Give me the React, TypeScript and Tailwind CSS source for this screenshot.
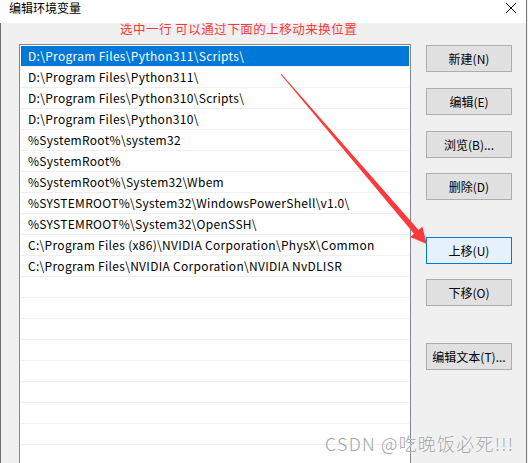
import type { ReactNode } from 'react';

const PATHS = [
  'D:\\Program Files\\Python311\\Scripts\\',
  'D:\\Program Files\\Python311\\',
  'D:\\Program Files\\Python310\\Scripts\\',
  'D:\\Program Files\\Python310\\',
  '%SystemRoot%\\system32',
  '%SystemRoot%',
  '%SystemRoot%\\System32\\Wbem',
  '%SYSTEMROOT%\\System32\\WindowsPowerShell\\v1.0\\',
  '%SYSTEMROOT%\\System32\\OpenSSH\\',
  'C:\\Program Files (x86)\\NVIDIA Corporation\\PhysX\\Common',
  'C:\\Program Files\\NVIDIA Corporation\\NVIDIA NvDLISR',
];

const ROWS = [...PATHS, ...Array.from({ length: 10 }, () => '')];

function WinButton({ children, active, className }: { children: ReactNode; active?: boolean; className?: string }) {
  return (
    <button
      className={
        'w-[86px] h-[27px] flex items-center justify-center text-[12px] leading-[14px] text-black border ' +
        (active ? 'bg-[#e5f1fb] border-[#0078d7] ' : 'bg-[#e1e1e1] border-[#adadad] ') +
        (className ?? '')
      }
    >
      {children}
    </button>
  );
}

export default function App() {
  return (
    <div className="relative w-[528px] h-[463px] overflow-hidden bg-[#f0f0f0] font-['Noto_Sans_CJK_SC',sans-serif] text-black">
      <div className="w-[527px] h-full flex flex-col border-r border-[#7a7a7a]">
        {/* title bar */}
        <div className="h-[23px] shrink-0 bg-white flex items-start justify-between">
          <span className="pl-[9px] pt-px text-[12px] leading-[14px]">编辑环境变量</span>
          <svg width="12" height="12" viewBox="0 0 12 12" className="mt-[2px] mr-[9px]">
            <path d="M1 1 L11 11 M11 1 L1 11" stroke="#000" strokeWidth="1" />
          </svg>
        </div>

        {/* body */}
        <div className="flex-1 flex flex-col border-l border-[#6e6e6e] pl-[18px] pt-[21px] overflow-hidden">
          <div className="flex items-start gap-[15px]">
            <div className="w-[392px] h-[440px] border border-[#828790] bg-white p-px flex flex-col">
              {ROWS.map((p, i) => (
                <div
                  key={i}
                  className={
                    'h-[21px] shrink-0 border-b border-[#efefef] pl-[7px] text-[12px] leading-[20px] tracking-[0.3px] whitespace-nowrap ' +
                    (i === 0 ? 'bg-[#0078d7] text-white' : 'text-black')
                  }
                >
                  {p}
                </div>
              ))}
            </div>

            <div className="flex flex-col">
              <WinButton className="mt-px">新建(N)</WinButton>
              <WinButton className="mt-[16px]">编辑(E)</WinButton>
              <WinButton className="mt-[16px]">浏览(B)...</WinButton>
              <WinButton className="mt-[15px]">删除(D)</WinButton>
              <WinButton className="mt-[37px]" active>上移(U)</WinButton>
              <WinButton className="mt-[15px]">下移(O)</WinButton>
              <WinButton className="mt-[37px]">编辑文本(T)...</WinButton>
            </div>
          </div>
        </div>
      </div>

      {/* red annotation: note + arrow */}
      <div className="absolute left-[120px] top-[20px] text-[12.5px] leading-[18px] tracking-[0.5px] text-[#f53a3a] whitespace-nowrap">
        选中一行 可以通过下面的上移动来换位置
      </div>
      <svg className="absolute left-0 top-0 pointer-events-none" width="528" height="463">
        <polygon
          points="281.4,73.7 418.6,229.9 422.4,226.6 426.7,244 410.2,237 414,233.7 280.6,74.3"
          fill="#fb3b3b"
        />
      </svg>

      {/* watermark */}
      <div className="absolute left-[325px] top-[432px] text-[18px] leading-[22px] tracking-[1.2px] font-light text-[#a3a3a3] whitespace-nowrap [text-shadow:0_0_1px_#fff,0_0_1px_#fff]">
        CSDN @吃晚饭必死!!!
      </div>
    </div>
  );
}
